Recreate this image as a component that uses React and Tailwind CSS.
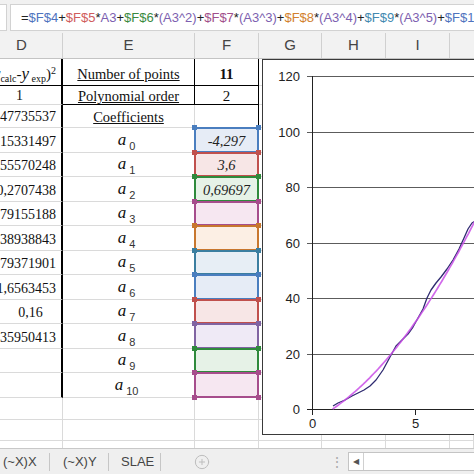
import React from 'react';
import { CirclePlus } from 'lucide-react';

const serif = "font-['Liberation_Serif',serif]";

const FORMULA = [
  ['=', 'text-[#222]'], ['$F$4', 'text-[#4e73be]'], ['+', 'text-[#222]'], ['$F$5', 'text-[#d05c5c]'],
  ['*', 'text-[#222]'], ['A3', 'text-[#7d5fb0]'], ['+', 'text-[#222]'], ['$F$6', 'text-[#3a8a3f]'],
  ['*', 'text-[#222]'], ['(A3^2)', 'text-[#7d5fb0]'], ['+', 'text-[#222]'], ['$F$7', 'text-[#a14f8c]'],
  ['*', 'text-[#222]'], ['(A3^3)', 'text-[#7d5fb0]'], ['+', 'text-[#222]'], ['$F$8', 'text-[#d2812f]'],
  ['*', 'text-[#222]'], ['(A3^4)', 'text-[#7d5fb0]'], ['+', 'text-[#222]'], ['$F$9', 'text-[#4289b0]'],
  ['*', 'text-[#222]'], ['(A3^5)', 'text-[#7d5fb0]'], ['+', 'text-[#222]'], ['$F$10', 'text-[#4e73be]'],
];

// coefficient rows: D value, F value, range colours
const COEFS = [
  { d: '2,15331497', val: '-4,297', line: 'border-[#4a7ebf]', fill: 'bg-[#e6ecf6]', dot: 'bg-[#4a7ebf]' },
  { d: '0,55570248', val: '3,6', line: 'border-[#c0504d]', fill: 'bg-[#f7e6e6]', dot: 'bg-[#c0504d]' },
  { d: '0,2707438', val: '0,69697', line: 'border-[#2f8a3c]', fill: 'bg-[#e6f2e7]', dot: 'bg-[#2f8a3c]' },
  { d: '0,79155188', val: '', line: 'border-[#a64d8c]', fill: 'bg-[#f6e7f1]', dot: 'bg-[#a64d8c]' },
  { d: '0,38938843', val: '', line: 'border-[#c8772e]', fill: 'bg-[#fcefe4]', dot: 'bg-[#c8772e]' },
  { d: '0,79371901', val: '', line: 'border-[#3b7ea0]', fill: 'bg-[#e7eef5]', dot: 'bg-[#3b7ea0]' },
  { d: '1,6563453', val: '', line: 'border-[#4a7ebf]', fill: 'bg-[#e6ecf6]', dot: 'bg-[#4a7ebf]' },
  { d: '0,16', center: true, val: '', line: 'border-[#c0504d]', fill: 'bg-[#f7e6e6]', dot: 'bg-[#c0504d]' },
  { d: '0,35950413', val: '', line: 'border-[#8064a2]', fill: 'bg-[#efeaf6]', dot: 'bg-[#8064a2]' },
  { d: '', val: '', line: 'border-[#2f8a3c]', fill: 'bg-[#e6f2e7]', dot: 'bg-[#2f8a3c]' },
  { d: '', val: '', line: 'border-[#a64d8c]', fill: 'bg-[#f6e7f1]', dot: 'bg-[#a64d8c]' },
];

const DATA = [
  [333, 406], [338, 403], [345, 400], [352, 396], [358, 393], [364, 390], [370, 386], [376, 380],
  [383, 370], [390, 357], [396, 346], [402, 340], [408, 334], [413, 327], [418, 318], [423, 309],
  [427, 298], [431, 290], [436, 283], [441, 277], [447, 269], [453, 260], [459, 249], [464, 238],
  [468, 229], [472, 223], [478, 219],
];

const grid = 'border-r border-b border-[#dadada]';

function EmptyTail() {
  return (
    <>
      <div className={`w-[63px] shrink-0 ${grid}`} />
      <div className={`w-[64px] shrink-0 ${grid}`} />
      <div className={`w-[64px] shrink-0 ${grid}`} />
      <div className={`w-[24px] shrink-0 ${grid}`} />
    </>
  );
}

function Chart() {
  const X = (u) => 49 + 20.6 * u;
  const Y = (v) => 349 - 2.775 * v;
  const fit = [];
  for (let u = 1; u <= 8.3; u += 0.1) {
    fit.push(`${X(u).toFixed(1)},${Y(-4.297 + 3.6 * u + 0.69697 * u * u).toFixed(1)}`);
  }
  const data = DATA.map(([x, y]) => `${x - 263},${y - 60}`).join(' ');
  const ys = [0, 20, 40, 60, 80, 100, 120];
  return (
    <div className="absolute left-[262px] top-0 z-30 h-[376px] w-[240px] border border-[#3a3a3a] bg-white">
      <svg width="238" height="374" className="block font-['Liberation_Sans',sans-serif]">
        {ys.map((v) => {
          const y = Math.round(Y(v)) + 0.5;
          return (
            <g key={v}>
              <line x1={44} x2={238} y1={y} y2={y} stroke={v === 0 ? '#222' : '#5c5c5c'} strokeWidth="1" />
              <text x={37} y={y} textAnchor="end" dominantBaseline="central" fontSize="13" fill="#222">{v}</text>
            </g>
          );
        })}
        <line x1={49.5} x2={49.5} y1={Math.round(Y(120))} y2={Math.round(Y(0)) + 6} stroke="#222" />
        <line x1={152.5} x2={152.5} y1={Math.round(Y(0))} y2={Math.round(Y(0)) + 6} stroke="#222" />
        <text x={49.5} y={363} textAnchor="middle" dominantBaseline="central" fontSize="13" fill="#222">0</text>
        <text x={152.5} y={363} textAnchor="middle" dominantBaseline="central" fontSize="13" fill="#222">5</text>
        <polyline points={data} fill="none" stroke="#2e2a70" strokeWidth="1.3" strokeLinejoin="round" />
        <polyline points={fit.join(' ')} fill="none" stroke="#c94fe6" strokeOpacity="0.85" strokeWidth="1.7" strokeLinejoin="round" />
      </svg>
    </div>
  );
}

export default function App() {
  return (
    <div className="flex h-[474px] w-[474px] flex-col overflow-hidden bg-white font-['Liberation_Sans',sans-serif]">
      {/* formula bar */}
      <div className="flex h-[33px] shrink-0 items-start gap-[3px] bg-[#f1f1f1] pt-[4px]">
        <div className="h-[27px] w-[7px] border border-l-0 border-[#d2d2d2] bg-white" />
        <div className="flex h-[27px] flex-1 items-center overflow-hidden whitespace-nowrap border border-r-0 border-[#d2d2d2] bg-white pl-[11px] text-[13px]">
          <span className="-mr-px inline-block h-[16px] w-px bg-black" />
          {FORMULA.map(([t, c], i) => (
            <span key={i} className={c}>{t}</span>
          ))}
        </div>
      </div>

      {/* column headers */}
      <div className="flex h-[26px] shrink-0 border-b border-[#c4c4c4] bg-[#f2f2f2] text-[15px] text-[#444]">
        <div className="flex w-[63px] shrink-0 items-center border-r border-[#d0d0d0] pl-[16px]">D</div>
        <div className="flex w-[132px] shrink-0 items-center justify-center border-r border-[#d0d0d0]">E</div>
        <div className="flex w-[64px] shrink-0 items-center justify-center border-r border-[#d0d0d0]">F</div>
        <div className="flex w-[63px] shrink-0 items-center justify-center border-r border-[#d0d0d0]">G</div>
        <div className="flex w-[64px] shrink-0 items-center justify-center border-r border-[#d0d0d0]">H</div>
        <div className="flex w-[64px] shrink-0 items-center justify-center border-r border-[#d0d0d0]">I</div>
        <div className="w-[24px] shrink-0" />
      </div>

      {/* sheet */}
      <div className={`relative flex-1 overflow-hidden leading-[16px] text-[#111] ${serif}`}>
        {/* row 1 */}
        <div className="flex h-[27px]">
          <div className="flex w-[63px] shrink-0 items-end justify-end overflow-hidden whitespace-nowrap border-r-2 border-b border-black pb-[3px] pr-[5px] text-[15px]">
            <span>(<i className="text-[16px]">y</i><sub className="text-[10px]">calc</sub>-<i className="text-[17px]">y</i><sub className="text-[10px]"> exp</sub>)<sup className="text-[10px]">2</sup></span>
          </div>
          <div className="flex w-[132px] shrink-0 items-end justify-center border-r border-b border-black pb-[3px] text-[14.5px] underline">Number of points</div>
          <div className="flex w-[64px] shrink-0 items-end justify-center border-r border-b border-black pb-[3px] text-[15px] font-bold">11</div>
          <EmptyTail />
        </div>
        {/* row 2 */}
        <div className="flex h-[19px]">
          <div className="flex w-[63px] shrink-0 items-end border-r-2 border-b border-r-black border-b-[#dadada] pl-[16px] text-[14px]">1</div>
          <div className="flex w-[132px] shrink-0 items-end justify-center border-r border-b border-black text-[14.5px] underline">Polynomial order</div>
          <div className="flex w-[64px] shrink-0 items-end justify-center border-r border-b border-black text-[15px]">2</div>
          <EmptyTail />
        </div>
        {/* row 3 */}
        <div className="flex h-[23px]">
          <div className="flex w-[63px] shrink-0 items-end justify-end overflow-hidden whitespace-nowrap border-r-2 border-b border-r-black border-b-[#dadada] pb-[2px] pr-[5px] text-[14px]">3,47735537</div>
          <div className={`flex w-[132px] shrink-0 items-end justify-center pb-[2px] text-[14.5px] underline ${grid}`}>Coefficients</div>
          <div className="w-[64px] shrink-0 border-r border-b border-r-black border-b-[#dadada]" />
          <EmptyTail />
        </div>
        {/* coefficient rows */}
        {COEFS.map((c, i) => (
          <div key={i} className="flex h-[24.5px]">
            <div className={`flex w-[63px] shrink-0 items-end overflow-hidden whitespace-nowrap border-r-2 border-b border-r-black border-b-[#dadada] pb-[2px] text-[14px] ${c.center ? 'justify-center' : 'justify-end pr-[5px]'}`}>{c.d}</div>
            <div className={`flex w-[132px] shrink-0 items-end justify-center pb-[4px] pr-[4px] ${grid}`}>
              <span className="text-[17px] italic leading-none">a</span>
              <span className="relative top-[4px] ml-[3px] font-['Liberation_Sans',sans-serif] text-[11px] leading-none text-[#333]">{i}</span>
            </div>
            <div className={`relative w-[64px] shrink-0 ${grid}`}>
              <div className={`absolute -top-px -left-px -right-px -bottom-px flex items-end justify-center border-2 pb-[2px] text-[14.5px] italic text-[#222] ${c.line} ${c.fill}`} style={{ zIndex: 10 + i }}>
                {c.val}
                <span className={`absolute -left-[4px] -top-[4px] h-[5px] w-[5px] ${c.dot}`} />
                <span className={`absolute -right-[4px] -top-[4px] h-[5px] w-[5px] ${c.dot}`} />
                <span className={`absolute -bottom-[4px] -left-[4px] h-[5px] w-[5px] ${c.dot}`} />
                <span className={`absolute -bottom-[4px] -right-[4px] h-[5px] w-[5px] ${c.dot}`} />
              </div>
            </div>
            <EmptyTail />
          </div>
        ))}
        {[22, 21, 22].map((h, i) => (
          <div key={`e${i}`} className="flex" style={{ height: h }}>
            <div className={`w-[63px] shrink-0 ${grid}`} />
            <div className={`w-[132px] shrink-0 ${grid}`} />
            <div className={`w-[64px] shrink-0 ${grid}`} />
            <EmptyTail />
          </div>
        ))}
        <Chart />
      </div>

      {/* sheet tabs */}
      <div className="flex h-[26px] shrink-0 items-center border-t border-[#c8c8c8] bg-[#efefef] text-[13px] text-[#444]">
        <div className="w-[49px] pl-[3px]">(~X)X</div>
        <div className="h-[18px] w-px bg-[#c6c6c6]" />
        <div className="w-[58px] pl-[13px]">(~X)Y</div>
        <div className="h-[18px] w-px bg-[#c6c6c6]" />
        <div className="w-[51px] pl-[12px]">SLAE</div>
        <div className="h-[18px] w-px bg-[#c6c6c6]" />
        <CirclePlus className="ml-[33px] h-[16px] w-[16px] text-[#bdbdbd]" strokeWidth={1.5} />
        <div className="ml-[120px] text-[14px] leading-none text-[#aaa]">⋮</div>
        <div className="ml-[4px] flex h-[19px] flex-1 items-stretch border border-r-0 border-[#c4c4c4] bg-white">
          <div className="flex w-[15px] items-center justify-center border-r border-[#d0d0d0] text-[8px] text-[#555]">◀</div>
        </div>
      </div>
    </div>
  );
}
